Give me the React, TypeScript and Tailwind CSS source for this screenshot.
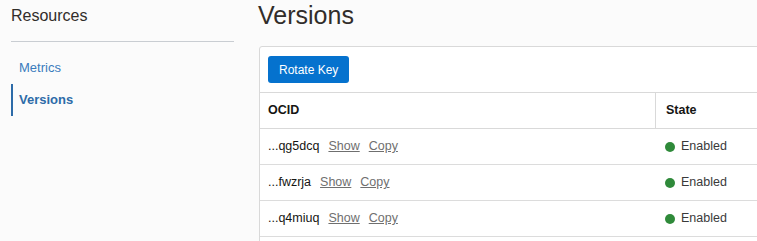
import React from 'react';

type Version = {
  ocid: string;
  state: string;
};

const versions: Version[] = [
  { ocid: '...qg5dcq', state: 'Enabled' },
  { ocid: '...fwzrja', state: 'Enabled' },
  { ocid: '...q4miuq', state: 'Enabled' },
];

const Sidebar: React.FC = () => {
  return (
    <aside className="w-[258px] shrink-0 pl-[11px] pr-[24px]">
      <h2 className="text-[16px] leading-[32px] text-[#312d2a]">Resources</h2>
      <div className="mt-[9px] border-t border-[#c9cdd2]" />

      <nav className="mt-[10px] flex flex-col">
        <a className="flex h-[32px] items-center border-l-2 border-transparent pl-[6px] text-[13px] text-[#3a7bbd]">
          Metrics
        </a>
        <a className="flex h-[32px] items-center border-l-2 border-[#2d6ba8] pl-[6px] text-[13px] font-bold text-[#2d6ba8]">
          Versions
        </a>
      </nav>
    </aside>
  );
};

export default function App() {
  return (
    <div className="flex h-[241px] w-[757px] overflow-hidden bg-[#fbfbfb] font-['Liberation_Sans',Arial,sans-serif]">
      <Sidebar />

      <main className="min-w-0 flex-1">
        <h1 className="text-[25px] leading-[30px] text-[#312d2a]">Versions</h1>

        <div className="ml-[1px] mt-[16px] min-h-[260px] w-[620px] rounded-[3px] border border-[#d9d9d9] bg-white">
          <div className="border-b border-[#d9d9d9] px-[8px] py-[9px]">
            <button className="h-[27px] rounded-[3px] bg-[#0572ce] px-[11px] text-[12px] text-white">
              Rotate Key
            </button>
          </div>

          <div className="grid grid-cols-[396px_1fr] border-b border-[#d9d9d9] text-[12.5px] font-bold text-[#161513]">
            <div className="flex h-[35px] items-center border-r border-[#d9d9d9] px-[8px]">OCID</div>
            <div className="flex h-[35px] items-center px-[10px]">State</div>
          </div>

          {versions.map((v) => (
            <div
              key={v.ocid}
              className="grid grid-cols-[397px_1fr] border-b border-[#dcdcdc] text-[12.5px] text-[#161513]"
            >
              <div className="flex h-[35px] items-center px-[8px]">
                <span>{v.ocid}</span>
                <a className="ml-[9px] text-[#6f6f6f] underline">Show</a>
                <a className="ml-[9px] text-[#6f6f6f] underline">Copy</a>
              </div>
              <div className="flex h-[35px] items-center gap-[6px] px-[8px]">
                <span className="h-[10px] w-[10px] rounded-full bg-[#2f8a3a]" />
                <span className="text-[#3a3a3a]">{v.state}</span>
              </div>
            </div>
          ))}
        </div>
      </main>
    </div>
  );
}
